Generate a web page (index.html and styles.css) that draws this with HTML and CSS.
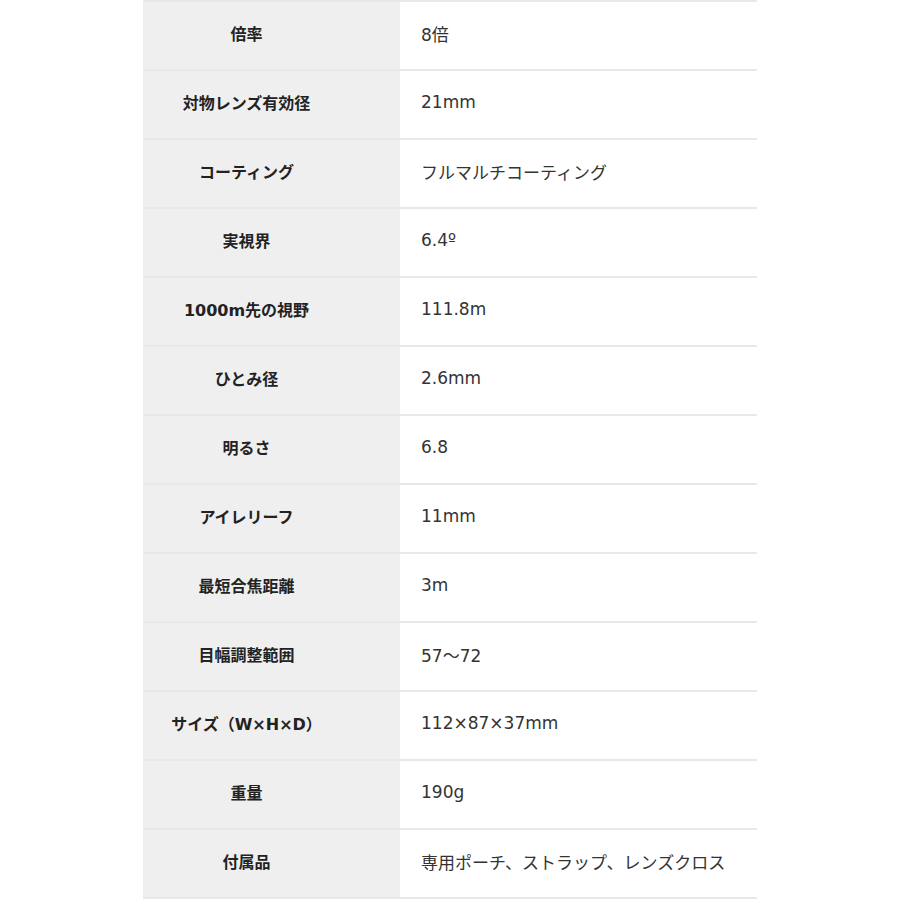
FILE: index.html
```html
<!DOCTYPE html>
<html lang="ja">
<head>
    <meta charset="UTF-8">
    <meta name="viewport" content="width=device-width, initial-scale=1.0">
    <title>仕様</title>
    <link rel="stylesheet" href="styles.css">
</head>
<body>
    <table class="spec-table">
        <tbody>
            <tr><th>倍率</th><td>8倍</td></tr>
            <tr><th>対物レンズ有効径</th><td>21mm</td></tr>
            <tr><th>コーティング</th><td>フルマルチコーティング</td></tr>
            <tr><th>実視界</th><td>6.4º</td></tr>
            <tr><th>1000m先の視野</th><td>111.8m</td></tr>
            <tr><th>ひとみ径</th><td>2.6mm</td></tr>
            <tr><th>明るさ</th><td>6.8</td></tr>
            <tr><th>アイレリーフ</th><td>11mm</td></tr>
            <tr><th>最短合焦距離</th><td>3m</td></tr>
            <tr><th>目幅調整範囲</th><td>57～72</td></tr>
            <tr><th>サイズ（W×H×D）</th><td>112×87×37mm</td></tr>
            <tr><th>重量</th><td>190g</td></tr>
            <tr><th>付属品</th><td>専用ポーチ、ストラップ、レンズクロス</td></tr>
        </tbody>
    </table>
</body>
</html>
```

FILE: styles.css
```css
* {
    margin: 0;
    padding: 0;
    box-sizing: border-box;
}

body {
    font-family: "DejaVu Sans", "Noto Sans CJK JP", sans-serif;
    background-color: #fff;
    color: #333;
}

.spec-table {
    width: 614px;
    margin: 0 auto;
    border-collapse: collapse;
    table-layout: fixed;
    border-top: 2px solid #e8e8e8;
}

.spec-table tr {
    border-bottom: 2px solid #e8e8e8;
}

.spec-table th,
.spec-table td {
    height: 69px;
    padding-bottom: 5px;
    vertical-align: middle;
}

.spec-table th {
    width: 257px;
    padding-right: 50px;
    background-color: #efefef;
    font-size: 16px;
    font-weight: bold;
    text-align: center;
    color: #222;
}

.spec-table td {
    padding-left: 21px;
    font-size: 17px;
    text-align: left;
}
```
